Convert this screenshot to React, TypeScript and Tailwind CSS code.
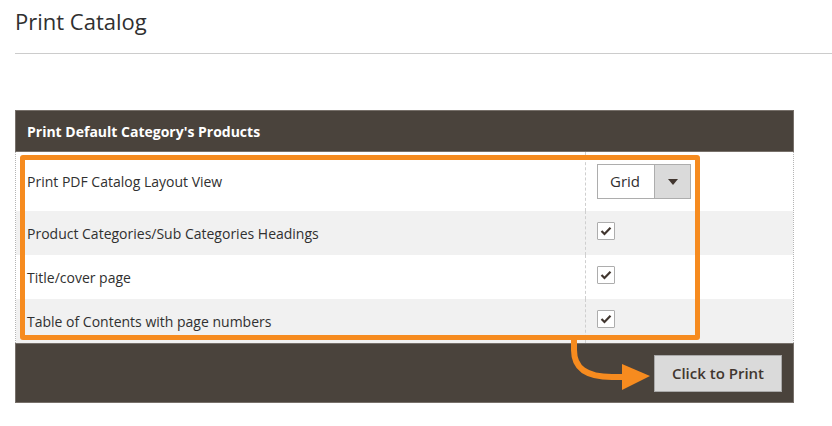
import React from 'react';

const ROWS = [
  { label: 'Product Categories/Sub Categories Headings', grey: true },
  { label: 'Title/cover page', grey: false },
  { label: 'Table of Contents with page numbers', grey: true },
];

function CheckBox() {
  return (
    <div className="w-[18px] h-[18px] border border-[#adadad] rounded-[1px] bg-white flex items-center justify-center">
      <svg width="12" height="10" viewBox="0 0 12 10">
        <path d="M1.5 5 L4.5 8 L10.5 1.8" fill="none" stroke="#41362f" strokeWidth="2.2" />
      </svg>
    </div>
  );
}

function LayoutSelect() {
  return (
    <div className="flex w-[94px] h-[35px] border border-[#adadad] bg-white">
      <div className="flex-1 flex items-center pl-[12px] text-[15px] text-[#303030]">Grid</div>
      <div className="w-[36px] bg-[#dadada] border-l border-[#adadad] flex items-center justify-center">
        <svg width="10" height="6" viewBox="0 0 10 6">
          <path d="M0 0 H10 L5 6 Z" fill="#41362f" />
        </svg>
      </div>
    </div>
  );
}

export default function App() {
  return (
    <div className="w-[832px] h-[426px] bg-white font-['Open_Sans',sans-serif] text-[#303030] overflow-hidden">
      <h1 className="pl-[15px] pt-[6px] text-[22px] leading-[30px] font-normal text-[#303030]">Print Catalog</h1>
      <div className="ml-[15px] mt-[17px] border-b border-[#cccccc]" />

      <div className="relative ml-[15px] mt-[56px] w-[779px]">
        <div className="h-[42px] bg-[#4a433c] border border-[#77706a] flex items-center pl-[11px] text-[14px] font-bold text-white">
          Print Default Category's Products
        </div>

        <div className="border-x border-dotted border-[#b5b5b5]">
          <div className="flex h-[59px]">
            <div className="w-[569px] flex items-center pl-[11px] text-[14px]">Print PDF Catalog Layout View</div>
            <div className="flex-1 border-l border-dashed border-[#cfcfcf] flex items-center pl-[11px]">
              <LayoutSelect />
            </div>
          </div>
          {ROWS.map((row) => (
            <div key={row.label} className={`flex h-[44px] ${row.grey ? 'bg-[#f1f1f1]' : 'bg-white'}`}>
              <div className="w-[569px] flex items-center pl-[11px] text-[14px]">{row.label}</div>
              <div className="flex-1 border-l border-dashed border-[#cfcfcf] pl-[11px] pt-[11px]">
                <CheckBox />
              </div>
            </div>
          ))}
        </div>

        <div className="h-[60px] bg-[#4a433c] border border-[#77706a] flex items-center justify-end pr-[11px]">
          <button className="w-[128px] h-[37px] bg-[#dadada] border border-[#a9a9a9] text-[15px] font-semibold text-[#41362f]">
            Click to Print
          </button>
        </div>

        <div className="absolute left-[5px] top-[45px] w-[680px] h-[185px] border-[5px] border-[#f68b1f] rounded-[3px] pointer-events-none" />

        <svg className="absolute left-[535px] top-[230px]" width="110" height="60" viewBox="0 0 110 60">
          <path d="M24 0 V10 C24 28 36 37 62 37 H76" fill="none" stroke="#f68b1f" strokeWidth="6" />
          <path d="M72 24 L100 36 L72 50 Z" fill="#f68b1f" />
        </svg>
      </div>
    </div>
  );
}
